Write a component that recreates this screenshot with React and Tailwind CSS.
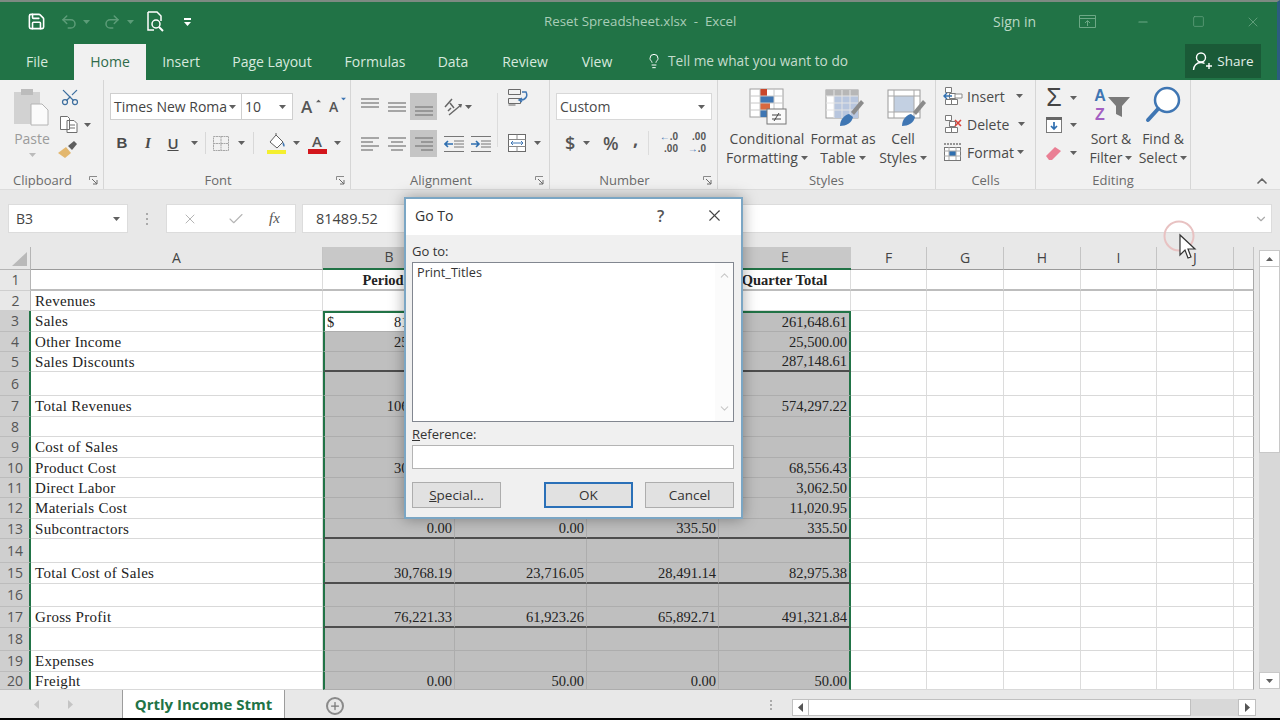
import React from "react";
import { X, ChevronDown, ChevronUp, Check, Lightbulb, Plus, Minus, Square, Save, Undo2, Redo2, Scissors } from "lucide-react";

const Caret = ({ className = "", color = "#606060" }) => (
  <svg width="7" height="4" viewBox="0 0 7 4" className={className}>
    <path d="M0 0h7L3.5 4z" fill={color} />
  </svg>
);

const Launcher = () => (
  <svg width="9" height="9" viewBox="0 0 9 9">
    <path d="M.5 4V.5H8M8 .5" stroke="#8a8a8a" fill="none" />
    <path d="M3 3l5 5M8 4v4H4" stroke="#6b6b6b" fill="none" />
  </svg>
);

const Lines = ({ rows }) => (
  <svg width="20" height="20" viewBox="0 0 20 20">
    {rows.map(([a, b, y]) => (
      <path key={y} d={`M${a} ${y}H${b}`} stroke="#7d7d7d" strokeWidth="1.3" />
    ))}
  </svg>
);

const Group = ({ w, label, launcher, children }) => (
  <div className={`${w} h-full flex flex-col border-r border-[#d6d6d6] shrink-0`}>
    <div className="flex-1 min-h-0">{children}</div>
    <div className={`h-[18px] flex items-center justify-center relative text-[13px] leading-none text-[#6a6a6a] ${launcher ? "pr-[18px]" : ""}`}>
      {label}
      {launcher && (
        <span className="absolute right-[5px] top-[5px]">
          <Launcher />
        </span>
      )}
    </div>
  </div>
);

const BigLabel = ({ w, one, two }) => (
  <div className={`${w} flex flex-col items-center text-[14px] leading-[19px] text-[#4a4a4a] whitespace-nowrap`}>
    <span>{one}</span>
    <span className="flex items-center gap-[3px]">
      {two}
      <Caret />
    </span>
  </div>
);

const TableIcon = ({ cellStyle }) => (
  <svg width="42" height="40" viewBox="0 0 42 40">
    <rect x="2" y="2" width="32" height="28" fill="#fff" stroke="#9a9a9a" />
    {cellStyle ? (
      <>
        <rect x="8" y="8" width="20" height="16" fill="#c3d0e2" />
        <path d="M8 2v28M28 2v28M2 8h32M2 24h32" stroke="#a8a8a8" />
      </>
    ) : (
      <>
        <rect x="2" y="2" width="32" height="6" fill="#b7b7b7" />
        <rect x="10" y="8" width="24" height="22" fill="#b8c6de" />
        <path d="M10 2v28M18 2v28M26 2v28M2 8h32M2 15h32M2 22h32" stroke="#e4e4e4" />
      </>
    )}
    <path d="M27 24l10-12 3 3-10 12z" fill="#8b8b8b" />
    <path d="M16 38c0-6 4-11 9-12l4 3c-1 6-7 9-13 9z" fill="#3f76b3" />
  </svg>
);

const CellsIcon = ({ type }) => (
  <svg width="20" height="20" viewBox="0 0 20 20">
    {type === "format" ? (
      <>
        <path d="M1 2h17" stroke="#777" strokeDasharray="2 1" strokeWidth="1.6" />
        <rect x="1.5" y="5.5" width="16" height="13" fill="#fff" stroke="#777" />
        <rect x="6" y="9" width="7" height="5" fill="#2f6fb0" />
        <path d="M6 5v13M13 5v13M1 9h17M1 14h17" stroke="#aaa" />
      </>
    ) : (
      <>
        <path d="M2.5 1.5h6v5h-6zM2.5 13.5h6v5h-6zM8.5 13.5h6v5h-6z" fill="#fff" stroke="#7a7a7a" />
        <path d="M6.5 7.5h6v5h-6z" fill="#fff" stroke="#7a7a7a" />
        {type === "insert" ? (
          <>
            <path d="M1 10h8M4 7l-3 3 3 3" stroke="#2f6fb0" strokeWidth="1.4" fill="none" />
            <path d="M12 8h7v4h-7z" fill="#fff" stroke="#8a8a8a" />
          </>
        ) : (
          <path d="M12 6l6 6M18 6l-6 6" stroke="#d8443c" strokeWidth="1.6" />
        )}
      </>
    )}
  </svg>
);

const ClipboardGroup = () => (
  <div className="flex pt-[8px] pl-[12px]">
    <div className="w-[40px] flex flex-col items-center">
      <svg width="38" height="38" viewBox="0 0 38 38">
        <rect x="1" y="4" width="26" height="32" fill="#d2d2d2" />
        <rect x="8" y="1" width="12" height="6" fill="#bcbcbc" />
        <path d="M18 16h11l6 6v15H18z" fill="#fbfbfb" stroke="#b4b4b4" />
      </svg>
      <span className="text-[14px] leading-[18px] mt-[4px] text-[#9b9b9b]">Paste</span>
      <Caret className="mt-[5px]" color="#bbb" />
    </div>
    <div className="ml-[5px] flex flex-col items-start">
      <Scissors size={20} strokeWidth={1.5} color="#3d6f9f" className="-rotate-90 ml-[3px] -mt-[1px]" />
      <div className="flex items-center mt-[8px]">
        <svg width="20" height="19" viewBox="0 0 20 19" className="ml-[2px]">
          <path d="M1.5 1.5h7l2 2v11h-9zM8 5.5h7l3 3v9H8z" fill="#fff" stroke="#6f6f6f" />
          <path d="M10 10h6M10 13h6" stroke="#6f6f6f" />
        </svg>
        <Caret className="ml-[5px]" />
      </div>
      <svg width="22" height="20" viewBox="0 0 22 20" className="mt-[5px]">
        <path d="M1 14l8-6 5 6-6 5z" fill="#e3b76e" />
        <path d="M11 7l6-5 3 3-5 6z" fill="#5e5e5e" />
      </svg>
    </div>
  </div>
);

const FontGroup = () => (
  <div className="pt-[13px] pl-[6px]">
    <div className="flex items-center h-[27px]">
      <div className="w-[132px] h-[27px] bg-white border border-[#cfcfcf] flex items-center justify-between pl-[3px] pr-[5px]">
        <span className="text-[14px] text-[#444] whitespace-nowrap">Times New Roma</span>
        <Caret />
      </div>
      <div className="w-[51px] h-[27px] bg-white border border-l-0 border-[#cfcfcf] flex items-center justify-between pl-[3px] pr-[6px]">
        <span className="text-[14px] text-[#444]">10</span>
        <Caret />
      </div>
      <div className="ml-[8px] w-[18px] text-[17px] font-semibold text-[#555] relative">
        A<Caret className="absolute right-[-3px] top-[5px] rotate-180 scale-75" />
      </div>
      <div className="ml-[10px] w-[18px] text-[14px] font-semibold text-[#555] relative">
        A<Caret className="absolute right-0 top-[1px] scale-75" color="#3f76b3" />
      </div>
    </div>
    <div className="flex items-center h-[24px] mt-[11px] text-[#4a4a4a]">
      <span className="w-[18px] ml-[3px] text-[15px] font-bold text-center font-['Liberation_Sans',sans-serif]">B</span>
      <span className="w-[18px] ml-[8px] text-[15px] italic font-semibold text-center font-['Liberation_Serif',serif]">I</span>
      <span className="w-[18px] ml-[7px] text-[15px] font-semibold underline text-center">U</span>
      <Caret className="ml-[9px]" />
      <div className="w-px h-[22px] bg-[#d8d8d8] ml-[7px]" />
      <svg width="18" height="17" viewBox="0 0 18 17" className="ml-[6px]">
        <path d="M1.5 1.5h15v14h-15zM9 1.5v14M1.5 8.500h15" stroke="#a7a7a7" strokeDasharray="2 0.5" fill="none" />
      </svg>
      <Caret className="ml-[8px]" />
      <div className="w-px h-[22px] bg-[#d8d8d8] ml-[8px]" />
      <svg width="20" height="22" viewBox="0 0 20 22" className="ml-[13px]">
        <path d="M3 10l6-7 7 7-6 6z" fill="#fff" stroke="#606060" />
        <path d="M9 3V1" stroke="#606060" />
        <path d="M16 10c2 2 2 4 1 5-1-1-2-3-1-5z" fill="#3f76b3" />
        <rect x="0" y="18" width="19" height="4" fill="#f4ef2f" />
      </svg>
      <Caret className="ml-[6px]" />
      <div className="w-[20px] ml-[7px] flex flex-col items-center">
        <span className="text-[15px] leading-[16px] font-semibold text-[#555]">A</span>
        <span className="w-[19px] h-[5px] bg-[#d3161c]" />
      </div>
      <Caret className="ml-[7px]" />
    </div>
  </div>
);

const AlignBtn = ({ on, rows }) => (
  <div className={`w-[27px] h-[27px] flex items-center justify-center ${on ? "bg-[#c5c5c5]" : ""}`}>
    <Lines rows={rows} />
  </div>
);

const AlignmentGroup = () => (
  <div className="flex pt-[13px] pl-[5px]">
    <div className="w-[141px]">
      <div className="flex items-center">
        <AlignBtn rows={[[1, 19, 2], [1, 19, 6], [1, 19, 10]]} />
        <AlignBtn rows={[[1, 19, 6], [1, 19, 10], [1, 19, 14]]} />
        <AlignBtn on rows={[[1, 19, 10], [1, 19, 14], [1, 19, 18]]} />
        <svg width="20" height="20" viewBox="0 0 20 20" className="ml-[6px]">
          <path d="M2 10l7-8M5 14l3-3M7 6l4 5" stroke="#666" strokeWidth="1.5" />
          <path d="M6 18L18 8" stroke="#666" strokeWidth="1.4" />
          <path d="M15 7l4 0-1 4z" fill="#666" />
        </svg>
        <Caret className="ml-[2px]" />
      </div>
      <div className="flex items-center mt-[10px]">
        <AlignBtn rows={[[1, 19, 4], [1, 13, 8], [1, 19, 12], [1, 13, 16]]} />
        <AlignBtn rows={[[1, 19, 4], [4, 16, 8], [1, 19, 12], [4, 16, 16]]} />
        <AlignBtn on rows={[[1, 19, 4], [7, 19, 8], [1, 19, 12], [7, 19, 16]]} />
        <svg width="20" height="18" viewBox="0 0 20 18" className="ml-[7px]">
          <path d="M0 1.500h20M0 16.500h20M10 6h10M10 9h10M10 12h10" stroke="#777" />
          <path d="M9 9H1M4 6L1 9l3 3" stroke="#2f6fb0" strokeWidth="1.6" fill="none" />
        </svg>
        <svg width="20" height="18" viewBox="0 0 20 18" className="ml-[7px]">
          <path d="M0 1.500h20M0 16.500h20M10 6h10M10 9h10M10 12h10" stroke="#777" />
          <path d="M0 9h8M5 6l3 3-3 3" stroke="#2f6fb0" strokeWidth="1.6" fill="none" />
        </svg>
      </div>
    </div>
    <div className="w-px h-[54px] bg-[#dcdcdc]" />
    <div className="pl-[9px] flex flex-col">
      <svg width="21" height="22" viewBox="0 0 21 22" className="-mt-[5px]">
        <path d="M1.500 1.500h12v5h-12zM1.500 10.500h12v5h-12zM1.500 17h7" stroke="#6b6b6b" fill="none" />
        <path d="M15 4h4c2 4 0 8-6 8M15 10l-3 2 3 2" stroke="#3f76b3" strokeWidth="1.5" fill="none" />
      </svg>
      <div className="flex items-center mt-[23px]">
        <svg width="20" height="20" viewBox="0 0 20 20">
          <rect x="1.500" y="1.500" width="17" height="17" fill="#fff" stroke="#6b6b6b" />
          <path d="M1.500 6.500h17M1.500 13.500h17M10 1.500v5M10 13.500v5" stroke="#8a8a8a" />
          <path d="M4 10h12M6 8l-2 2 2 2M14 8l2 2-2 2" stroke="#3f76b3" fill="none" />
        </svg>
        <Caret className="ml-[7px]" />
      </div>
    </div>
  </div>
);

const NumberGroup = () => (
  <div className="pt-[13px] pl-[6px]">
    <div className="w-[156px] h-[27px] bg-white border border-[#d8d8d8] flex items-center justify-between pl-[3px] pr-[6px]">
      <span className="text-[14px] text-[#4a4a4a]">Custom</span>
      <Caret />
    </div>
    <div className="flex items-center h-[24px] mt-[11px] text-[#555]">
      <span className="w-[14px] ml-[9px] text-[18px] font-semibold leading-none">$</span>
      <Caret className="ml-[4px]" />
      <span className="w-[20px] ml-[13px] text-[18px] font-semibold leading-none">%</span>
      <span className="w-[10px] ml-[10px] text-[18px] font-bold leading-none -mt-[9px]">,</span>
      <div className="w-px h-[24px] bg-[#dcdcdc] ml-[5px]" />
      <div className="ml-[7px] w-[22px] text-[10px] leading-[12px] text-right font-bold font-['Liberation_Sans',sans-serif]">
        <span className="text-[#3f76b3]">←</span>.0<br />.00
      </div>
      <div className="ml-[6px] w-[22px] text-[10px] leading-[12px] text-right font-bold font-['Liberation_Sans',sans-serif]">
        .00<br /><span className="text-[#3f76b3]">→</span>.0
      </div>
    </div>
  </div>
);

const StylesGroup = () => (
  <div className="flex flex-col pt-[8px] pl-[8px]">
    <div className="flex h-[40px]">
      <div className="w-[84px] pl-[23px]">
        <svg width="44" height="40" viewBox="0 0 44 40">
          <rect x="1" y="1" width="33" height="28" fill="#fff" stroke="#a0a0a0" />
          <rect x="11" y="1" width="7" height="7" fill="#c9472b" />
          <rect x="11" y="8" width="14" height="7" fill="#3f76b3" />
          <rect x="11" y="15" width="10" height="7" fill="#d8683f" />
          <rect x="11" y="22" width="7" height="7" fill="#3f76b3" />
          <path d="M11 1v28M25 1v28M1 8h33M1 15h33M1 22h33" stroke="#c8c8c8" />
          <rect x="18" y="21" width="19" height="15" fill="#fafafa" stroke="#777" />
          <path d="M23 27h9M23 31h9M30 25l-5 8" stroke="#444" />
        </svg>
      </div>
      <div className="w-[66px] pl-[14px]"><TableIcon /></div>
      <div className="w-[50px] pl-[10px]"><TableIcon cellStyle /></div>
    </div>
    <div className="flex mt-[1px] ml-[1px]">
      <BigLabel w="w-[80px]" one="Conditional" two="Formatting" />
      <BigLabel w="w-[72px]" one="Format as" two="Table" />
      <BigLabel w="w-[48px]" one="Cell" two="Styles" />
    </div>
  </div>
);

const CellsGroup = () => (
  <div className="flex flex-col pt-[2px] pl-[7px] text-[14px] text-[#4a4a4a]">
    {[
      ["insert", "Insert", "ml-[11px]"],
      ["delete", "Delete", "ml-[9px]"],
      ["format", "Format", "ml-[3px]"],
    ].map(([type, label, gap]) => (
      <div key={type} className="flex items-center h-[28px]">
        <CellsIcon type={type} />
        <span className="ml-[4px]">{label}</span>
        <Caret className={gap} />
      </div>
    ))}
  </div>
);

const EditingGroup = () => (
  <div className="flex pt-[6px] pl-[8px] text-[#4a4a4a]">
    <div className="w-[38px] flex flex-col -mt-[2px]">
      <div className="flex items-center h-[27px]">
        <span className="w-[20px] text-center text-[25px] leading-none text-[#444] font-['Liberation_Sans',sans-serif]">Σ</span>
        <Caret className="ml-[6px]" />
      </div>
      <div className="flex items-center h-[28px]">
        <svg width="20" height="20" viewBox="0 0 20 20">
          <rect x="2.500" y="2.500" width="15" height="15" fill="#fff" stroke="#7a7a7a" />
          <rect x="2" y="2" width="16" height="3" fill="#666" />
          <path d="M10 7v7M7 11l3 3 3-3" stroke="#2f6fb0" strokeWidth="1.7" fill="none" />
        </svg>
        <Caret className="ml-[6px]" />
      </div>
      <div className="flex items-center h-[27px]">
        <svg width="20" height="18" viewBox="0 0 20 18">
          <path d="M2 12l9-9 6 4-9 9H5z" fill="#ea7f94" />
        </svg>
        <Caret className="ml-[6px]" />
      </div>
    </div>
    <div className="flex flex-col ml-[7px]">
      <div className="flex h-[44px]">
        <div className="w-[52px] flex">
          <div className="w-[16px] text-[16px] leading-[18.500px] font-bold text-center ml-[3px] mt-[1px] font-['Liberation_Sans',sans-serif]">
            <span className="text-[#3f76b3]">A</span>
            <br />
            <span className="text-[#a35fc2]">Z</span>
          </div>
          <svg width="24" height="24" viewBox="0 0 24 24" className="mt-[8px] -ml-[1px]">
            <path d="M1 3h22l-8 9v11l-6-3v-8z" fill="#7a7a7a" />
          </svg>
        </div>
        <svg width="42" height="42" viewBox="0 0 42 42" className="ml-[1px] -mt-[3px]">
          <circle cx="25" cy="17" r="12" fill="#fff" stroke="#3f76b3" strokeWidth="2.5" />
          <path d="M16 26L6 37" stroke="#3f76b3" strokeWidth="4" strokeLinecap="round" />
        </svg>
      </div>
      <div className="flex -mt-[1px] -ml-[4px]">
        <BigLabel w="w-[52px]" one="Sort &" two="Filter" />
        <BigLabel w="w-[52px]" one="Find &" two="Select" />
      </div>
    </div>
  </div>
);

const Ribbon = () => (
  <div className="h-[110px] bg-[#f1f1f1] flex relative border-b border-[#dcdcdc]">
    <Group w="w-[104px]" label="Clipboard" launcher><ClipboardGroup /></Group>
    <Group w="w-[247px]" label="Font" launcher><FontGroup /></Group>
    <Group w="w-[199px]" label="Alignment" launcher><AlignmentGroup /></Group>
    <Group w="w-[168px]" label="Number" launcher><NumberGroup /></Group>
    <Group w="w-[218px]" label="Styles"><StylesGroup /></Group>
    <Group w="w-[100px]" label="Cells"><CellsGroup /></Group>
    <Group w="w-[155px]" label="Editing"><EditingGroup /></Group>
    <ChevronUp size={16} strokeWidth={2.5} color="#666" className="ml-[63px] mt-[93px]" />
  </div>
);

const tabs = [
  ["File", "w-[74px]"],
  ["Home", "w-[72px]"],
  ["Insert", "w-[70px]"],
  ["Page Layout", "w-[112px]"],
  ["Formulas", "w-[94px]"],
  ["Data", "w-[62px]"],
  ["Review", "w-[82px]"],
  ["View", "w-[62px]"],
];

const TitleBar = () => (
  <div className="h-[44px] pb-[3px] bg-[#217346] border-t-2 border-[#7d8a82] border-r-[3px] border-r-[#2b5c80] flex items-center text-[14px] text-[#cfe3d6]">
    <Save size={19} strokeWidth={2} color="#fff" className="ml-[27px]" />
    <Undo2 size={18} color="#5c9c78" className="ml-[14px]" />
    <Caret className="ml-[5px]" color="#5c9c78" />
    <Redo2 size={18} color="#5c9c78" className="ml-[13px]" />
    <Caret className="ml-[6px]" color="#5c9c78" />
    <div className="ml-[12px] relative w-[20px] h-[22px]">
      <svg width="20" height="22" viewBox="0 0 20 22">
        <path d="M2 1h9l4 4v5M2 1v18h6" stroke="#fff" strokeWidth="1.500" fill="none" />
        <circle cx="10" cy="13" r="4" stroke="#fff" strokeWidth="1.500" fill="none" />
        <path d="M13 16l4 4" stroke="#fff" strokeWidth="2" />
      </svg>
    </div>
    <div className="ml-[18px] flex flex-col items-center gap-[2px]">
      <span className="w-[7px] h-[2px] bg-white" />
      <Caret color="#fff" />
    </div>
    <span className="ml-[353px] w-[191px] whitespace-nowrap text-[13.300px] text-[#a9cdb7]">Reset Spreadsheet.xlsx&nbsp; -&nbsp; Excel</span>
    <span className="ml-[258px] text-[#b9d8c5]">Sign in</span>
    <svg width="17" height="13" viewBox="0 0 17 13" className="ml-[43px]">
      <path d="M.5.5h16v12H.5zM.5 3.500h16M8.500 11V6M6 8l2.500-2.500L11 8" stroke="#6da886" fill="none" />
    </svg>
    <Minus size={14} color="#6da886" className="ml-[40px]" />
    <Square size={13} strokeWidth={1.2} color="#6da886" className="ml-[42px]" />
    <X size={16} strokeWidth={1.2} color="#6da886" className="ml-[40px]" />
  </div>
);

const TabBar = () => (
  <div className="h-[36px] bg-[#217346] border-r-[3px] border-r-[#2b5c80] flex items-stretch text-[14px] text-[#d7e9de]">
    {tabs.map(([name, w]) => (
      <div
        key={name}
        className={`${w} flex items-center justify-center pb-[2px] ${name === "Home" ? "bg-[#f1f1f1] text-[#2f6b4a]" : ""}`}
      >
        {name}
      </div>
    ))}
    <div className="flex items-center ml-[18px] pb-[2px] text-[13.700px] text-[#c4dccd]">
      <Lightbulb size={16} strokeWidth={1.5} color="#fff" />
      <span className="ml-[6px]">Tell me what you want to do</span>
    </div>
    <div className="ml-auto mr-[16px] mb-[2px] w-[76px] bg-[#1a5a37] text-[13.500px] text-[#e2efe7] flex items-center justify-center gap-[5px]">
      <svg width="20" height="20" viewBox="0 0 20 20" fill="none" stroke="#fff" strokeWidth="1.4">
        <circle cx="9" cy="6.500" r="4.500" />
        <path d="M1.500 19c0-4 3-7.500 7.500-7.500 1.500 0 2.500.3 3.500 1M14 15h6M17 12v6" />
      </svg>
      Share
    </div>
  </div>
);

const FormulaBar = () => (
  <div className="h-[57px] pt-[14px] pl-[8px] pr-[8px] flex items-start">
    <div className="w-[120px] h-[29px] bg-white border border-[#dcdcdc] flex items-center justify-between pl-[7px] pr-[7px] text-[14px] text-[#444]">
      B3
      <Caret />
    </div>
    <div className="w-[38px] h-[29px] flex flex-col items-center justify-center gap-[3px]">
      <span className="w-[2px] h-[2px] bg-[#aaa]" />
      <span className="w-[2px] h-[2px] bg-[#aaa]" />
      <span className="w-[2px] h-[2px] bg-[#aaa]" />
    </div>
    <div className="w-[130px] h-[29px] bg-white border border-[#dcdcdc] flex items-center pl-[15px]">
      <X size={16} strokeWidth={1.5} color="#b5b5b5" />
      <Check size={18} strokeWidth={1.5} color="#b5b5b5" className="ml-[29px]" />
      <span className="ml-[24px] text-[15px] italic text-[#555] font-['Liberation_Serif',serif]">fx</span>
    </div>
    <div className="ml-[6px] w-[970px] h-[29px] bg-white border border-[#dcdcdc] flex items-center justify-between pl-[13px] pr-[3px] text-[14.500px] text-[#444]">
      81489.52
      <ChevronDown size={14} color="#aaa" />
    </div>
  </div>
);

const gridCols = "grid grid-cols-[31px_292px_132px_132px_132px_132px_76px_77px_77px_76px_77px_20px]";

const headers = ["A", "B", "C", "D", "E", "F", "G", "H", "I", "J", ""];

const rows = [
  { h: "h-[21px]", a: "", b: "Period 1", e: "Quarter Total", head: true },
  { h: "h-[20px]", a: "Revenues" },
  { h: "h-[21px]", a: "Sales", b: "81,489.52", e: "261,648.61", first: true },
  { h: "h-[20px]", a: "Other Income", b: "25,500.00", e: "25,500.00" },
  { h: "h-[20px]", a: "Sales Discounts", e: "287,148.61", rule: true },
  { h: "h-[24px]", a: "" },
  { h: "h-[21px]", a: "Total Revenues", b: "106,989.52", e: "574,297.22" },
  { h: "h-[20px]", a: "" },
  { h: "h-[21px]", a: "Cost of Sales" },
  { h: "h-[20px]", a: "Product Cost", b: "30,768.19", e: "68,556.43" },
  { h: "h-[20px]", a: "Direct Labor", e: "3,062.50" },
  { h: "h-[21px]", a: "Materials Cost", e: "11,020.95" },
  { h: "h-[20px]", a: "Subcontractors", b: "0.00", c: "0.00", d: "335.50", e: "335.50", rule: true },
  { h: "h-[24px]", a: "" },
  { h: "h-[21px]", a: "Total Cost of Sales", b: "30,768.19", c: "23,716.05", d: "28,491.14", e: "82,975.38", rule: true },
  { h: "h-[23px]", a: "" },
  { h: "h-[21px]", a: "Gross Profit", b: "76,221.33", c: "61,923.26", d: "65,892.71", e: "491,321.84", rule: true },
  { h: "h-[23px]", a: "" },
  { h: "h-[21px]", a: "Expenses" },
  { h: "h-[18px]", a: "Freight", b: "0.00", c: "50.00", d: "0.00", e: "50.00" },
];

const serif = "font-['Liberation_Serif',serif] text-[14.500px] leading-[16px] text-[#222] whitespace-nowrap";

const SelCell = ({ v, col, row, active }) => {
  const bg = active ? "bg-white" : "bg-[#bfbfbf]";
  const edge = col === "b" ? "border-l-2 border-l-[#217346] border-r border-r-[#adadad]" : col === "e" ? "border-r-2 border-r-[#217346]" : "border-r border-r-[#adadad]";
  const bottom = row.rule ? "border-b-2 border-b-[#4d4d4d]" : "border-b border-b-[#adadad]";
  const top = row.first ? "border-t-2 border-t-[#217346]" : "";
  return (
    <div className={`${bg} ${edge} ${bottom} ${top} ${serif} flex items-center justify-end pr-[2px] relative`}>
      {active && <span className="absolute left-[2px]">$</span>}
      {v}
    </div>
  );
};

const Sheet = () => (
  <div className="flex h-[443px]">
    <div className="w-[1254px] overflow-hidden">
      <div className={`${gridCols} h-[23px] leading-[16px]`}>
        <div className="border-b border-r border-[#b5b5b5] flex items-end justify-end pr-[3px] pb-[3px]">
          <svg width="15" height="14" viewBox="0 0 15 14"><path d="M15 0v14H0z" fill="#b9b9b9" /></svg>
        </div>
        {headers.map((c, i) => (
          <div
            key={i}
            className={`flex items-center justify-center pb-[1px] text-[14px] text-[#444] ${
              i >= 1 && i <= 4
                ? "bg-[#c8c8c8] border-b-2 border-b-[#217346]"
                : "border-b border-b-[#9a9a9a] border-r border-r-[#c4c4c4]"
            }`}
          >
            {c}
          </div>
        ))}
      </div>
      {rows.map((row, i) => {
        const n = i + 1;
        const sel = n >= 3;
        const line = row.head ? "border-b-2 border-b-[#bdbdbd]" : "border-b border-b-[#d9d9d9]";
        return (
          <div key={n} className={`${gridCols} ${row.h}`}>
            <div className={`flex items-center justify-center pl-[1px] text-[14px] leading-[16px] text-[#555] ${sel ? "bg-[#cfcfcf] border-r-2 border-r-[#217346] border-b border-b-[#bcbcbc]" : "border-r border-r-[#b5b5b5] border-b border-b-[#cfcfcf]"}`}>
              {n}
            </div>
            <div className={`bg-white ${line} border-r border-r-[#dcdcdc] font-['Liberation_Serif',serif] text-[15px] tracking-[0.3px] leading-[16px] text-[#222] whitespace-nowrap flex items-center pl-[4px]`}>{row.a}</div>
            {sel ? (
              <>
                <SelCell v={row.b} col="b" row={row} active={n === 3} />
                <SelCell v={row.c} col="c" row={row} />
                <SelCell v={row.d} col="d" row={row} />
                <SelCell v={row.e} col="e" row={row} />
              </>
            ) : (
              <>
                <div className={`bg-white ${line} border-r border-r-[#dcdcdc] ${serif} font-bold flex items-center justify-center`}>{row.b}</div>
                <div className={`bg-white ${line} border-r border-r-[#dcdcdc]`} />
                <div className={`bg-white ${line} border-r border-r-[#dcdcdc]`} />
                <div className={`bg-white ${line} border-r border-r-[#dcdcdc] ${serif} font-bold flex items-center justify-center`}>{row.e}</div>
              </>
            )}
            {[0, 1, 2, 3, 4].map((k) => (
              <div key={k} className={`bg-white ${line} border-r border-r-[#dcdcdc]`} />
            ))}
            <div className={`bg-white ${line} border-r border-r-[#a8a8a8]`} />
          </div>
        );
      })}
    </div>
    <div className="ml-[5px] w-[21px] mt-[3px] h-[439px] flex flex-col bg-[#d8d8d8]">
      <div className="h-[17px] bg-white border border-[#c8c8c8] flex items-center justify-center">
        <Caret className="rotate-180" />
      </div>
      <div className="h-[186px] bg-white border-x border-b border-[#c8c8c8]" />
      <div className="h-[219px]" />
      <div className="h-[17px] bg-white border border-[#c8c8c8] flex items-center justify-center">
        <Caret />
      </div>
    </div>
  </div>
);

const Triangle = ({ left, color = "#555" }) => (
  <svg width="5" height="9" viewBox="0 0 5 9" className={left ? "rotate-180" : ""}>
    <path d="M0 0l5 4.500L0 9z" fill={color} />
  </svg>
);

const BottomBar = () => (
  <div className="h-[30px] border-b-2 border-black bg-[#e8e8e8] flex items-start relative">
    <div className="w-[122px] h-[28px] flex items-center pl-[34px] gap-[29px]">
      <Triangle left color="#c4c4c4" />
      <Triangle color="#c4c4c4" />
    </div>
    <div className="w-[163px] h-[28px] bg-white border-x border-[#9c9c9c] flex items-center justify-center text-[15px] font-bold text-[#217346]">
      Qrtly Income Stmt
    </div>
    <div className="ml-[41px] mt-[7px] w-[18px] h-[18px] rounded-full border-2 border-[#8a8a8a] flex items-center justify-center">
      <Plus size={12} strokeWidth={2.5} color="#777" />
    </div>
    <div className="ml-[426px] mt-[10px] flex flex-col gap-[2px]">
      <span className="w-[2px] h-[2px] bg-[#aaa]" />
      <span className="w-[2px] h-[2px] bg-[#aaa]" />
      <span className="w-[2px] h-[2px] bg-[#aaa]" />
    </div>
    <div className="ml-[20px] mt-[9px] w-[464px] h-[17px] flex bg-[#d8d8d8]">
      <div className="w-[17px] bg-white border border-[#c0c0c0] flex items-center justify-center"><Triangle left /></div>
      <div className="w-[382px] bg-white border-y border-r border-[#c0c0c0]" />
      <div className="flex-1" />
      <div className="w-[18px] bg-white border border-[#c0c0c0] flex items-center justify-center"><Triangle /></div>
    </div>
  </div>
);

const DialogButton = ({ w, focus, children }) => (
  <div className={`${w} h-[26px] bg-[#e1e1e1] flex items-center justify-center text-[13.500px] text-[#333] ${focus ? "border-2 border-[#2a70b8]" : "border border-[#adadad]"}`}>
    {children}
  </div>
);

const GoToDialog = () => (
  <div className="absolute left-[404px] top-[197px] w-[339px] h-[322px] bg-[#f0f0f0] border-2 border-[#7ba6c4] shadow-[0_0_14px_rgba(0,0,0,0.35)] flex flex-col text-[#333]">
    <div className="h-[36px] pb-[3px] bg-white flex items-center pl-[9px] text-[14px]">
      <span className="w-[40px]">Go To</span>
      <span className="ml-[202px] text-[16px] text-[#555] font-semibold">?</span>
      <X size={19} strokeWidth={1.4} color="#444" className="ml-[41px]" />
    </div>
    <div className="px-[6px] flex flex-col">
      <span className="mt-[7px] text-[13px] leading-[18px]">Go to:</span>
      <div className="mt-[2px] w-[322px] h-[160px] bg-white border border-[#828790] flex justify-between">
        <span className="pl-[4px] pt-[1px] text-[12.700px] leading-[16px]">Print_Titles</span>
        <div className="w-[18px] flex flex-col items-center justify-between py-[6px] bg-[#fbfbfb]">
          <ChevronUp size={13} color="#c8c8c8" />
          <ChevronDown size={13} color="#c8c8c8" />
        </div>
      </div>
      <span className="mt-[3px] text-[13px] leading-[18px]"><u>R</u>eference:</span>
      <div className="mt-[2px] w-[322px] h-[24px] bg-white border border-[#b4b4b4]" />
      <div className="mt-[13px] flex">
        <DialogButton w="w-[89px]"><span><u>S</u>pecial...</span></DialogButton>
        <div className="ml-[43px]"><DialogButton w="w-[89px]" focus>OK</DialogButton></div>
        <div className="ml-[12px]"><DialogButton w="w-[89px]">Cancel</DialogButton></div>
      </div>
    </div>
  </div>
);

const Pointer = () => (
  <svg width="40" height="44" viewBox="0 0 40 44" className="absolute left-[1160px] top-[217px]">
    <circle cx="19" cy="19" r="14.500" fill="none" stroke="#e8c2c2" strokeWidth="2" />
    <path d="M20 18v20l5-5 3 8 3-1-3-8h7z" fill="#fff" stroke="#333" strokeWidth="1.200" />
  </svg>
);

export default function App() {
  return (
    <div className="relative w-[1280px] h-[720px] overflow-hidden bg-[#e8e8e8] font-['Open_Sans','Noto_Sans',sans-serif]">
      <TitleBar />
      <TabBar />
      <Ribbon />
      <FormulaBar />
      <Sheet />
      <BottomBar />
      <GoToDialog />
      <Pointer />
    </div>
  );
}
